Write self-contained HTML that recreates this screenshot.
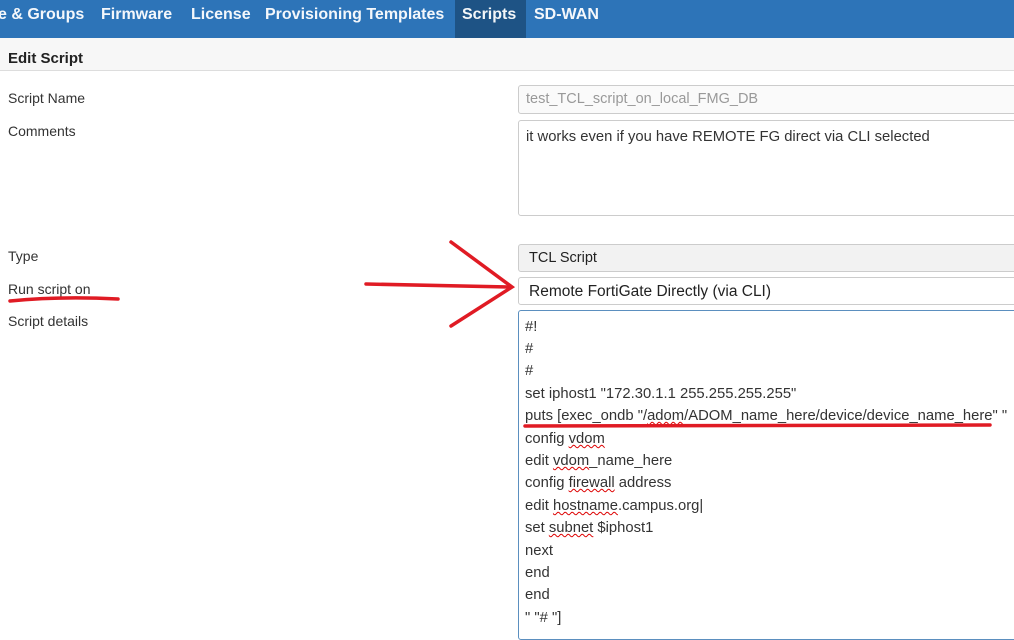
<!DOCTYPE html>
<html><head><style>
body{margin:0;width:1014px;height:631px;overflow:hidden;background:#fff;font-family:"Liberation Sans",sans-serif;position:relative;color:#333}
.nav{position:absolute;left:0;top:0;width:1014px;height:38px;background:#2d74b8}
.nav span{position:absolute;top:6px;color:#fff;font-size:16px;font-weight:bold;opacity:.95}
.act{position:absolute;left:455px;top:0;width:71px;height:38px;background:#1e5385}
.hdr{position:absolute;left:0;top:38px;width:1014px;height:32px;background:#f7f7f7;border-bottom:1px solid #ddd}
.hdr b{position:absolute;left:8px;top:12px;font-size:15px;color:#222}
.l{position:absolute;left:8px;font-size:14px;color:#333}
.box{position:absolute;left:518px;width:500px;border:1px solid #ccc;border-radius:3px;font-size:14.5px;box-sizing:border-box;padding-left:7px}
.ta{position:absolute;left:518px;top:310px;width:500px;height:330px;border:1px solid #5b8fbf;border-radius:3px;box-sizing:border-box}
.ta div{position:absolute;left:6px;font-size:14.8px;color:#333;white-space:pre}
.sq{text-decoration:underline wavy #d00;text-decoration-thickness:1px}
</style></head><body>
<div class="nav"><div class="act"></div>
<span style="left:-2px">e &amp; Groups</span><span style="left:101px">Firmware</span><span style="left:191px">License</span><span style="left:265px">Provisioning Templates</span><span style="left:462px">Scripts</span><span style="left:534px">SD-WAN</span></div>
<div class="hdr"><b>Edit Script</b></div>
<div class="l" style="top:90px">Script Name</div>
<div class="l" style="top:123px">Comments</div>
<div class="l" style="top:248px">Type</div>
<div class="l" style="top:281px">Run script on</div>
<div class="l" style="top:313px">Script details</div>
<div class="box" style="top:85px;height:29px;background:#fafafa;color:#999;line-height:27px">test_TCL_script_on_local_FMG_DB</div>
<div class="box" style="top:120px;height:96px;padding-top:8px;font-size:14.8px">it works even if you have REMOTE FG direct via CLI selected</div>
<div class="box" style="top:244px;height:28px;background:#f2f2f2;line-height:27px;padding-left:10px;color:#222">TCL Script</div>
<div class="box" style="top:277px;height:28px;line-height:27px;padding-left:10px;color:#222;font-size:15.5px">Remote FortiGate Directly (via CLI)</div>
<div class="ta">
<div style="top:8px">#!</div><div style="top:30px">#</div><div style="top:52px">#</div>
<div style="top:75px">set iphost1 "172.30.1.1 255.255.255.255"</div>
<div style="top:97px">puts [exec_ondb "/<span class="sq">adom</span>/ADOM_name_here/device/device_name_here" "</div>
<div style="top:120px">config <span class="sq">vdom</span></div>
<div style="top:142px">edit <span class="sq">vdom</span>_name_here</div>
<div style="top:164px">config <span class="sq">firewall</span> address</div>
<div style="top:187px">edit <span class="sq">hostname</span>.campus.org|</div>
<div style="top:209px">set <span class="sq">subnet</span> $iphost1</div>
<div style="top:232px">next</div><div style="top:254px">end</div><div style="top:276px">end</div>
<div style="top:299px">" "# "]</div>
</div>
<svg width="1014" height="631" style="position:absolute;left:0;top:0">
<g stroke="#e01b24" stroke-width="3.5" fill="none" stroke-linecap="round">
<path d="M366 284 L510 287"/>
<path d="M451 242 L512 287 L451 326"/>
<path d="M10 301 Q60 296 118 299"/>
<path d="M525 426 Q760 425 990 425"/>
</g></svg>
</body></html>
